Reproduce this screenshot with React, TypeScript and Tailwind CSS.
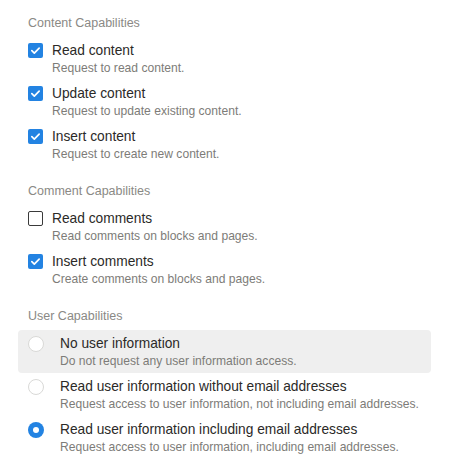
import React from 'react';

interface Option {
  title: string;
  description: string;
  checked: boolean;
}

const contentOptions: Option[] = [
  { title: 'Read content', description: 'Request to read content.', checked: true },
  { title: 'Update content', description: 'Request to update existing content.', checked: true },
  { title: 'Insert content', description: 'Request to create new content.', checked: true },
];

const commentOptions: Option[] = [
  { title: 'Read comments', description: 'Read comments on blocks and pages.', checked: false },
  { title: 'Insert comments', description: 'Create comments on blocks and pages.', checked: true },
];

const userOptions: Option[] = [
  { title: 'No user information', description: 'Do not request any user information access.', checked: false },
  {
    title: 'Read user information without email addresses',
    description: 'Request access to user information, not including email addresses.',
    checked: false,
  },
  {
    title: 'Read user information including email addresses',
    description: 'Request access to user information, including email addresses.',
    checked: true,
  },
];

const Checkbox = ({ checked }: { checked: boolean }) =>
  checked ? (
    <div className="w-[15px] h-[15px] rounded-[2px] bg-[#2383e2] flex items-center justify-center shrink-0">
      <svg width="11" height="11" viewBox="0 0 12 12" fill="none">
        <path d="M2 6.2l2.7 2.7L10 3.4" stroke="white" strokeWidth="1.8" strokeLinecap="round" strokeLinejoin="round" />
      </svg>
    </div>
  ) : (
    <div className="w-[15px] h-[15px] rounded-[2px] border-[1.5px] border-[#3a3a3a] shrink-0" />
  );

const Radio = ({ checked }: { checked: boolean }) =>
  checked ? (
    <div className="w-[16px] h-[16px] rounded-full bg-[#2383e2] flex items-center justify-center shrink-0">
      <div className="w-[6px] h-[6px] rounded-full bg-white" />
    </div>
  ) : (
    <div className="w-[16px] h-[16px] rounded-full border border-[#d9d9d7] bg-white shrink-0" />
  );

const Section = ({ title, children }: { title: string; children: React.ReactNode }) => (
  <div>
    <div className="px-[10px] text-[12.5px] leading-[18px] text-[#8a8985] mb-[5px]">{title}</div>
    <div className="flex flex-col">{children}</div>
  </div>
);

const Row = ({ option, radio, highlight }: { option: Option; radio?: boolean; highlight?: boolean }) => (
  <div className={`flex items-start px-[10px] pt-[5px] pb-[3px] rounded-[4px] ${highlight ? 'bg-[#efefef]' : ''}`}>
    <div className={`h-[17px] flex items-center ${radio ? 'mr-[16px]' : 'mr-[9px]'}`}>
      {radio ? <Radio checked={option.checked} /> : <Checkbox checked={option.checked} />}
    </div>
    <div className="flex flex-col whitespace-nowrap">
      <div className="text-[13.75px] leading-[18px] text-[#2b2a28]">{option.title}</div>
      <div className="text-[12.1px] leading-[17px] text-[#7d7c78]">{option.description}</div>
    </div>
  </div>
);

export default function App() {
  return (
    <div className="w-[474px] h-[470px] bg-white pl-[18px] pt-[14px] font-['Liberation_Sans',sans-serif]">
      <div className="w-[413px] flex flex-col gap-4">
        <Section title="Content Capabilities">
          {contentOptions.map((o) => (
            <Row key={o.title} option={o} />
          ))}
        </Section>
        <Section title="Comment Capabilities">
          {commentOptions.map((o) => (
            <Row key={o.title} option={o} />
          ))}
        </Section>
        <Section title="User Capabilities">
          {userOptions.map((o, i) => (
            <Row key={o.title} option={o} radio highlight={i === 0} />
          ))}
        </Section>
      </div>
    </div>
  );
}
